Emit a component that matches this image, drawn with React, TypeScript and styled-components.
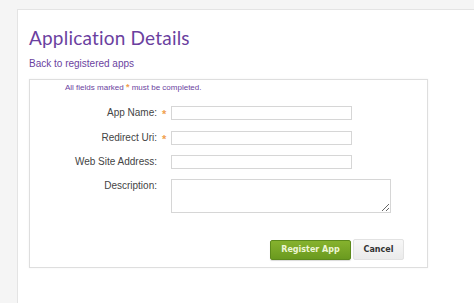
import styled, { createGlobalStyle } from 'styled-components';

const GlobalStyle = createGlobalStyle`
  html, body {
    margin: 0;
    background: #f5f5f5;
  }
`;

const Page = styled.div`
  padding: 9px 0 0 17px;
  height: 303px;
  box-sizing: border-box;
  overflow: hidden;
`;

const Panel = styled.div`
  background: #fff;
  border-top: 1px solid #e4e4e4;
  border-left: 1px solid #e4e4e4;
  height: 100%;
  box-sizing: border-box;
  padding: 15px 0 0 11px;
`;

const Title = styled.h1`
  margin: 0;
  font-family: Lato, 'Open Sans', sans-serif;
  font-weight: 400;
  font-size: 19px;
  line-height: 25px;
  color: #6b3fa0;
  letter-spacing: 0.2px;
`;

const BackLink = styled.a`
  display: block;
  margin-top: 8px;
  font-family: 'Liberation Sans', Arial, sans-serif;
  font-size: 10px;
  line-height: 12px;
  color: #6b3fa0;
  text-decoration: none;
`;

const FormBox = styled.div`
  margin-top: 9px;
  width: 399px;
  height: 189px;
  box-sizing: border-box;
  border: 1px solid #dedede;
  box-shadow: 0 0 2px rgba(0, 0, 0, 0.06);
  padding: 0 23px 0 0;
  display: flex;
  flex-direction: column;
`;

const Note = styled.p`
  margin: 2px 0 0 35px;
  font-family: 'Liberation Sans', Arial, sans-serif;
  font-size: 8px;
  line-height: 10px;
  color: #6b3fa0;
`;

const Star = styled.span`
  color: #f0a050;
  font-weight: 700;
  font-size: 9px;
`;

const Fields = styled.div`
  margin-top: 12px;
  display: grid;
  grid-template-columns: 127px 14px auto;
  row-gap: 10px;
  align-items: center;
`;

const Label = styled.label<{ $top?: boolean }>`
  font-family: 'Liberation Sans', Arial, sans-serif;
  font-size: 10px;
  line-height: 12px;
  color: #444;
  text-align: right;
  align-self: ${p => (p.$top ? 'start' : 'center')};
  margin-top: ${p => (p.$top ? '1px' : '0')};
`;

const Req = styled.span`
  font-family: 'Liberation Sans', Arial, sans-serif;
  font-size: 11px;
  font-weight: 700;
  color: #f0a050;
  padding-left: 5px;
  margin-top: 3px;
`;

const TextInput = styled.input`
  width: 181px;
  height: 14px;
  box-sizing: border-box;
  margin: 0;
  border: 1px solid #d6d6d6;
  background: #fff;
  padding: 1px 3px;
  font-size: 10px;
`;

const TextArea = styled.textarea`
  width: 220px;
  height: 34px;
  box-sizing: border-box;
  margin: 0;
  border: 1px solid #d6d6d6;
  padding: 2px 3px;
  font-size: 10px;
  resize: both;
`;

const Actions = styled.div`
  margin-top: 26px;
  display: flex;
  justify-content: flex-end;
  gap: 2px;
  align-items: center;
`;

const Button = styled.button<{ $primary?: boolean }>`
  box-sizing: border-box;
  padding: 0;
  white-space: nowrap;
  font-family: 'DejaVu Sans', Verdana, sans-serif;
  font-weight: 700;
  font-size: 8px;
  border-radius: 2px;
  cursor: pointer;
  color: ${p => (p.$primary ? '#eef6d6' : '#333')};
  border: 1px solid ${p => (p.$primary ? '#5d8a1c' : '#e2e2e2')};
  background: ${p =>
    p.$primary
      ? 'linear-gradient(#86b22e, #6a9a1f)'
      : 'linear-gradient(#f7f7f7, #ebebeb)'};
  box-shadow: ${p => (p.$primary ? '0 1px 1px rgba(0,0,0,0.15)' : 'none')};
  width: ${p => (p.$primary ? '81px' : '51px')};
  height: ${p => (p.$primary ? '20px' : '21px')};
`;

export default function App() {
  return (
    <>
      <GlobalStyle />
      <Page>
        <Panel>
          <Title>Application Details</Title>
          <BackLink href="#">Back to registered apps</BackLink>
          <FormBox>
            <Note>
              All fields marked <Star>*</Star> must be completed.
            </Note>
            <Fields>
              <Label>App Name:</Label>
              <Req>*</Req>
              <TextInput />
              <Label>Redirect Uri:</Label>
              <Req>*</Req>
              <TextInput />
              <Label>Web Site Address:</Label>
              <span />
              <TextInput />
              <Label $top>Description:</Label>
              <span />
              <TextArea />
            </Fields>
            <Actions>
              <Button $primary>Register App</Button>
              <Button>Cancel</Button>
            </Actions>
          </FormBox>
        </Panel>
      </Page>
    </>
  );
}
